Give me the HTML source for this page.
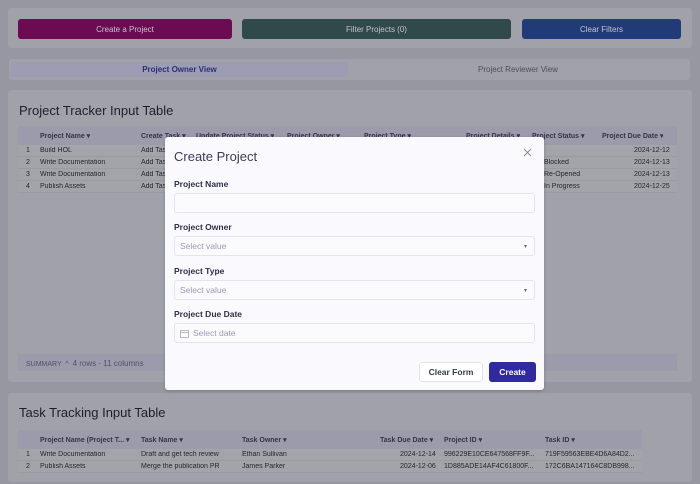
<!DOCTYPE html>
<html><head><meta charset="utf-8"><style>
*{box-sizing:border-box;margin:0;padding:0}
body{width:700px;height:484px;overflow:hidden;background:#9697a0;font-family:"Liberation Sans Narrow","Liberation Sans",sans-serif;position:relative;color:#2c2c38}
.a{position:absolute}
.panel{background:#a1a1a9;border-radius:3px}
.btn{position:absolute;border-radius:3px;color:#c4c4d0;font-size:8px;display:flex;align-items:center;justify-content:center}
.tbl{position:absolute;font-size:7px;color:#26262e}
.hdr{background:#9b9bac;height:19px}
.row{height:12px;border-bottom:1px solid #9a9aa4;background:#a3a3aa}
.c{position:absolute;white-space:nowrap;overflow:hidden}
.h{font-weight:bold;color:#34344a}
.modal{position:absolute;left:165px;top:137px;width:379px;height:253px;background:#fafafe;border-radius:3px;font-family:"Liberation Sans",sans-serif;box-shadow:0 1px 3px rgba(0,0,0,.2)}
.lbl{position:absolute;left:9px;font-size:8.5px;font-weight:bold;color:#2d2f4a}
.inp{position:absolute;left:9px;width:361px;height:20px;border:1px solid #e4e4ee;border-radius:3px;background:#fbfbfe;font-size:8.5px;color:#9a9ab4;padding-left:5px;display:flex;align-items:center}
</style></head><body>
<div class="a panel" style="left:8px;top:8px;width:684px;height:40px"></div>
<div class="btn" style="left:18px;top:19px;width:214px;height:20px;background:#6c0a52">Create a Project</div>
<div class="btn" style="left:242px;top:19px;width:269px;height:20px;background:#2f4a48">Filter Projects (0)</div>
<div class="btn" style="left:522px;top:19px;width:159px;height:20px;background:#213a78">Clear Filters</div>

<div class="a panel" style="left:9px;top:59px;width:681px;height:21px"></div>
<div class="a" style="left:11px;top:62px;width:337px;height:15px;background:#9c9cb2;border-radius:2px;font-size:8px;color:#2e2d7a;font-weight:bold;display:flex;align-items:center;justify-content:center">Project Owner View</div>
<div class="a" style="left:348px;top:62px;width:340px;height:15px;font-size:8px;color:#4c4c60;display:flex;align-items:center;justify-content:center">Project Reviewer View</div>

<div class="a panel" style="left:8px;top:90px;width:684px;height:292px"></div>
<div class="a" style="left:19px;top:103px;font-size:13px;color:#1e1e2c">Project Tracker Input Table</div>
<div class="tbl" style="left:18px;top:126px;width:659px">
<div class="hdr"></div><div class="row"></div><div class="row"></div><div class="row"></div><div class="row"></div>
<div class="c h" style="left:22px;top:6px">Project Name ▾</div>
<div class="c h" style="left:123px;top:6px">Create Task ▾</div>
<div class="c h" style="left:178px;top:6px">Update Project Status ▾</div>
<div class="c h" style="left:269px;top:6px">Project Owner ▾</div>
<div class="c h" style="left:346px;top:6px">Project Type ▾</div>
<div class="c h" style="left:448px;top:6px">Project Details ▾</div>
<div class="c h" style="left:514px;top:6px">Project Status ▾</div>
<div class="c h" style="left:584px;top:6px">Project Due Date ▾</div>
<div class="c" style="left:8px;top:21px">1</div><div class="c" style="left:22px;top:21px">Build HOL</div><div class="c" style="left:123px;top:21px">Add Task</div><div class="c" style="left:616px;top:21px">2024-12-12</div>
<div class="c" style="left:8px;top:33px">2</div><div class="c" style="left:22px;top:33px">Write Documentation</div><div class="c" style="left:123px;top:33px">Add Task</div><div class="c" style="left:526px;top:33px">Blocked</div><div class="c" style="left:616px;top:33px">2024-12-13</div>
<div class="c" style="left:8px;top:45px">3</div><div class="c" style="left:22px;top:45px">Write Documentation</div><div class="c" style="left:123px;top:45px">Add Task</div><div class="c" style="left:526px;top:45px">Re-Opened</div><div class="c" style="left:616px;top:45px">2024-12-13</div>
<div class="c" style="left:8px;top:57px">4</div><div class="c" style="left:22px;top:57px">Publish Assets</div><div class="c" style="left:123px;top:57px">Add Task</div><div class="c" style="left:526px;top:57px">In Progress</div><div class="c" style="left:616px;top:57px">2024-12-25</div>
</div>
<div class="a" style="left:18px;top:354px;width:659px;height:17px;background:#9b9bac;font-size:7px;color:#50506a;padding:5px 8px">SUMMARY &nbsp;^ &nbsp;<span style="font-size:8px">4 rows · 11 columns</span></div>

<div class="a panel" style="left:8px;top:393px;width:684px;height:89px"></div>
<div class="a" style="left:19px;top:405px;font-size:13px;color:#1e1e2c">Task Tracking Input Table</div>
<div class="tbl" style="left:18px;top:430px;width:624px">
<div class="hdr"></div><div class="row"></div><div class="row"></div>
<div class="c h" style="left:22px;top:6px">Project Name (Project T... ▾</div>
<div class="c h" style="left:123px;top:6px">Task Name ▾</div>
<div class="c h" style="left:224px;top:6px">Task Owner ▾</div>
<div class="c h" style="left:362px;top:6px">Task Due Date ▾</div>
<div class="c h" style="left:426px;top:6px">Project ID ▾</div>
<div class="c h" style="left:527px;top:6px">Task ID ▾</div>
<div class="c" style="left:8px;top:21px">1</div><div class="c" style="left:22px;top:21px">Write Documentation</div><div class="c" style="left:123px;top:21px">Draft and get tech review</div><div class="c" style="left:224px;top:21px">Ethan Sullivan</div><div class="c" style="left:382px;top:21px">2024-12-14</div><div class="c" style="left:426px;top:21px">996229E10CE647568FF9F...</div><div class="c" style="left:527px;top:21px">719F59563EBE4D6A84D2...</div>
<div class="c" style="left:8px;top:33px">2</div><div class="c" style="left:22px;top:33px">Publish Assets</div><div class="c" style="left:123px;top:33px">Merge the publication PR</div><div class="c" style="left:224px;top:33px">James Parker</div><div class="c" style="left:382px;top:33px">2024-12-06</div><div class="c" style="left:426px;top:33px">1D885ADE14AF4C61800F...</div><div class="c" style="left:527px;top:33px">172C6BA147164C8DB998...</div>
</div>

<div class="modal">
<div class="a" style="left:9px;top:12px;font-size:13px;color:#3a3c58">Create Project</div>
<svg class="a" style="left:358px;top:11px" width="9" height="9" viewBox="0 0 9 9"><path d="M1 1L8 8M8 1L1 8" stroke="#888aa0" stroke-width="1"/></svg>
<div class="lbl" style="top:42px">Project Name</div>
<div class="inp" style="top:56px"></div>
<div class="lbl" style="top:85px">Project Owner</div>
<div class="inp" style="top:99px">Select value<span style="position:absolute;right:7px;font-size:6px;color:#666">▾</span></div>
<div class="lbl" style="top:129px">Project Type</div>
<div class="inp" style="top:143px">Select value<span style="position:absolute;right:7px;font-size:6px;color:#666">▾</span></div>
<div class="lbl" style="top:172px">Project Due Date</div>
<div class="inp" style="top:186px"><svg width="9" height="9" viewBox="0 0 9 9" style="margin-right:4px"><rect x="0.5" y="1.5" width="8" height="7" fill="none" stroke="#b8b8c8"/><path d="M0.5 3.5H8.5" stroke="#b8b8c8"/></svg>Select date</div>
<div class="a" style="left:254px;top:225px;width:64px;height:20px;border:1px solid #e2e2ea;border-radius:3px;background:#fff;font-size:8.5px;font-weight:bold;color:#333a4a;display:flex;align-items:center;justify-content:center">Clear Form</div>
<div class="a" style="left:324px;top:225px;width:47px;height:20px;border-radius:3px;background:#302aa0;font-size:8.5px;font-weight:bold;color:#fff;display:flex;align-items:center;justify-content:center">Create</div>
</div>
</body></html>
